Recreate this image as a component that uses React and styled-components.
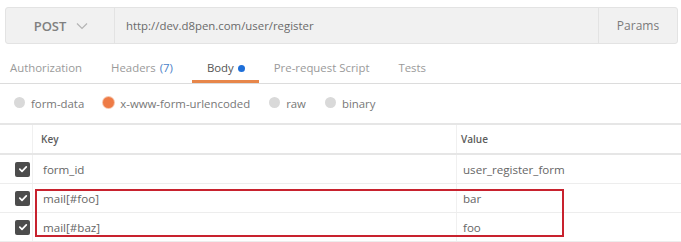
import React from "react";
import styled, { createGlobalStyle } from "styled-components";

const GlobalStyle = createGlobalStyle`
  html, body {
    margin: 0;
    padding: 0;
    background: #ffffff;
    font-family: "Open Sans", "Liberation Sans", sans-serif;
  }
`;

const tabs = [
  { label: "Authorization" },
  { label: "Headers", count: "(7)" },
  { label: "Body", active: true },
  { label: "Pre-request Script" },
  { label: "Tests" },
];

const bodyTypes = [
  { label: "form-data" },
  { label: "x-www-form-urlencoded", checked: true },
  { label: "raw" },
  { label: "binary" },
];

const params = [
  { key: "form_id", value: "user_register_form" },
  { key: "mail[#foo]", value: "bar", marked: true },
  { key: "mail[#baz]", value: "foo", marked: true },
];

const CheckIcon = () => (
  <svg width="10" height="10" viewBox="0 0 10 10">
    <path d="M1.8 5.2 L4 7.3 L8.3 2.8" fill="none" stroke="#fff" strokeWidth="1.7" strokeLinecap="round" strokeLinejoin="round" />
  </svg>
);

const ChevronIcon = () => (
  <svg width="12" height="8" viewBox="0 0 12 8">
    <path d="M1 1.5 L6 6.5 L11 1.5" fill="none" stroke="#b4b4b4" strokeWidth="1.2" />
  </svg>
);

const ParamRow = ({ param }) => (
  <Row>
    <CheckCell>
      <CheckBox>
        <CheckIcon />
      </CheckBox>
    </CheckCell>
    <KeyCell>{param.key}</KeyCell>
    <ValueCell>{param.value}</ValueCell>
  </Row>
);

const App = () => {
  const plain = params.filter((p) => !p.marked);
  const marked = params.filter((p) => p.marked);

  return (
    <>
      <GlobalStyle />
      <Page>
        <UrlBar>
          <MethodBox>
            <span>POST</span>
            <ChevronIcon />
          </MethodBox>
          <UrlText>http://dev.d8pen.com/user/register</UrlText>
          <ParamsButton>Params</ParamsButton>
        </UrlBar>

        <TabBar>
          {tabs.map((tab) => (
            <Tab key={tab.label} $active={tab.active}>
              {tab.label}
              {tab.count && <Count>{tab.count}</Count>}
              {tab.active && <Dot />}
            </Tab>
          ))}
        </TabBar>

        <RadioRow>
          {bodyTypes.map((type) => (
            <RadioOption key={type.label}>
              <Radio $checked={type.checked} />
              {type.label}
            </RadioOption>
          ))}
        </RadioRow>

        <Table>
          <HeaderRow>
            <CheckCell />
            <HeadCell>Key</HeadCell>
            <HeadValueCell>Value</HeadValueCell>
          </HeaderRow>
          {plain.map((p) => (
            <ParamRow key={p.key} param={p} />
          ))}
          <MarkedGroup>
            {marked.map((p) => (
              <ParamRow key={p.key} param={p} />
            ))}
            <Highlight />
          </MarkedGroup>
        </Table>
      </Page>
    </>
  );
};

const Page = styled.div`
  width: 681px;
  height: 242px;
  overflow: hidden;
  padding-top: 7px;
  box-sizing: border-box;
`;

const UrlBar = styled.div`
  display: flex;
  height: 37px;
  margin: 0 3px 0 5px;
  background: #f1f1f1;
  border: 1px solid #e3e3e3;
  border-radius: 3px;
  box-sizing: border-box;
  font-size: 12px;
  color: #6b6b6b;
`;

const MethodBox = styled.div`
  width: 109px;
  display: flex;
  align-items: center;
  justify-content: center;
  gap: 10px;
  border-right: 1px solid #e3e3e3;
  font-size: 13px;
  font-weight: 600;
  color: #808080;
  padding-left: 2px;
  box-sizing: border-box;
`;

const UrlText = styled.div`
  flex: 1;
  display: flex;
  align-items: center;
  padding-left: 11px;
  font-size: 11.4px;
  color: #6a6a6a;
`;

const ParamsButton = styled.div`
  width: 78px;
  display: flex;
  align-items: center;
  justify-content: center;
  border-left: 1px solid #e3e3e3;
  color: #7a7a7a;
`;

const TabBar = styled.div`
  display: flex;
  margin-top: 10px;
  height: 30px;
  border-bottom: 1px solid #dcdcdc;
  padding-left: 10px;
  gap: 29px;
  font-size: 11.4px;
  box-sizing: border-box;
`;

const Tab = styled.div`
  position: relative;
  display: flex;
  align-items: center;
  height: 27px;
  color: ${(p) => (p.$active ? "#555555" : "#9a9a9a")};
  ${(p) =>
    p.$active &&
    `
    margin: 0 -14px 0 -10px;
    padding: 0 14px 0 15px;
    &::after {
      content: "";
      position: absolute;
      left: 0;
      right: 0;
      bottom: -2px;
      height: 3px;
      background: #e7864a;
    }
  `}
`;

const Count = styled.span`
  color: #4a7fc9;
  margin-left: 4px;
`;

const Dot = styled.span`
  width: 7px;
  height: 7px;
  border-radius: 50%;
  background: #1e6fd9;
  margin-left: 4px;
  margin-top: 1px;
`;

const RadioRow = styled.div`
  display: flex;
  align-items: center;
  height: 39px;
  padding-left: 14px;
  gap: 19px;
  font-size: 11.4px;
  color: #777777;
`;

const RadioOption = styled.label`
  display: flex;
  align-items: center;
  gap: 6px;
`;

const Radio = styled.span`
  width: 11px;
  height: 11px;
  border-radius: 50%;
  margin-top: -3px;
  background: ${(p) => (p.$checked ? "#ee7b46" : "#d9d9d9")};
  box-shadow: ${(p) => (p.$checked ? "0 0 0 1px #f6c4aa" : "none")};
`;

const Table = styled.div`
  border-top: 2px solid #e6e6e6;
  font-size: 11px;
  color: #666666;
`;

const Row = styled.div`
  display: grid;
  grid-template-columns: 32px 424px 1fr;
  height: 29px;
  border-bottom: 1px solid #ededed;
  box-sizing: border-box;
`;

const HeaderRow = styled(Row)`
  height: 30px;
  border-bottom: 2px solid #e6e6e6;
`;

const Cell = styled.div`
  display: flex;
  align-items: center;
  padding-left: 8px;
  border-left: 1px solid #f0f0f0;
`;

const CheckCell = styled.div`
  display: flex;
  align-items: center;
  justify-content: flex-end;
  padding-right: 2px;
`;

const CheckBox = styled.span`
  width: 15px;
  height: 15px;
  border-radius: 2px;
  background: #4c4c4c;
  display: flex;
  align-items: center;
  justify-content: center;
`;

const HeadCell = styled(Cell)`
  font-size: 10px;
  font-weight: 600;
  color: #5c5c5c;
`;

const HeadValueCell = styled(HeadCell)`
  padding-left: 4px;
`;

const KeyCell = styled(Cell)`
  padding-left: 10px;
  font-size: 11.6px;
`;

const ValueCell = styled(Cell)`
  padding-left: 6px;
  font-size: 11.6px;
`;

const MarkedGroup = styled.div`
  position: relative;
`;

const Highlight = styled.div`
  position: absolute;
  left: 35px;
  top: 5px;
  width: 529px;
  height: 48px;
  border: 2px solid #c8222e;
  box-sizing: border-box;
  pointer-events: none;
`;

export default App;
